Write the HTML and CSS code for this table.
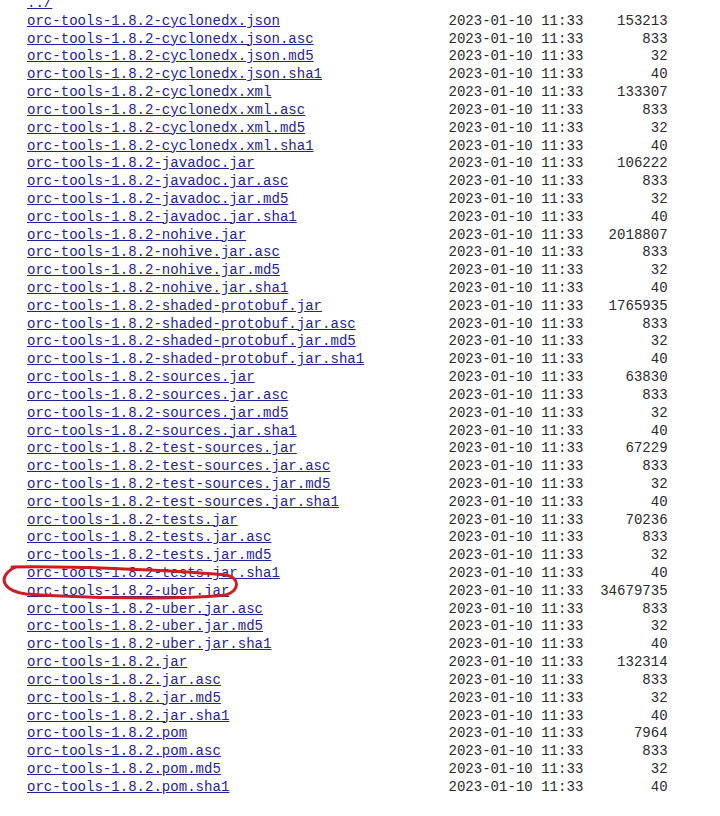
FILE: index.html
```html
<!DOCTYPE html>
<html lang="en">
<head>
  <meta charset="UTF-8" />
  <title>Index of orc-tools/1.8.2</title>
  <link rel="stylesheet" href="styles.css">
</head>
<body>
  <div id="listing">
    <div class="row"><a href="../">../</a><span></span><span></span></div>
    <div class="row"><a href="#">orc-tools-1.8.2-cyclonedx.json</a><span>2023-01-10 11:33</span><span class="size">153213</span></div>
    <div class="row"><a href="#">orc-tools-1.8.2-cyclonedx.json.asc</a><span>2023-01-10 11:33</span><span class="size">833</span></div>
    <div class="row"><a href="#">orc-tools-1.8.2-cyclonedx.json.md5</a><span>2023-01-10 11:33</span><span class="size">32</span></div>
    <div class="row"><a href="#">orc-tools-1.8.2-cyclonedx.json.sha1</a><span>2023-01-10 11:33</span><span class="size">40</span></div>
    <div class="row"><a href="#">orc-tools-1.8.2-cyclonedx.xml</a><span>2023-01-10 11:33</span><span class="size">133307</span></div>
    <div class="row"><a href="#">orc-tools-1.8.2-cyclonedx.xml.asc</a><span>2023-01-10 11:33</span><span class="size">833</span></div>
    <div class="row"><a href="#">orc-tools-1.8.2-cyclonedx.xml.md5</a><span>2023-01-10 11:33</span><span class="size">32</span></div>
    <div class="row"><a href="#">orc-tools-1.8.2-cyclonedx.xml.sha1</a><span>2023-01-10 11:33</span><span class="size">40</span></div>
    <div class="row"><a href="#">orc-tools-1.8.2-javadoc.jar</a><span>2023-01-10 11:33</span><span class="size">106222</span></div>
    <div class="row"><a href="#">orc-tools-1.8.2-javadoc.jar.asc</a><span>2023-01-10 11:33</span><span class="size">833</span></div>
    <div class="row"><a href="#">orc-tools-1.8.2-javadoc.jar.md5</a><span>2023-01-10 11:33</span><span class="size">32</span></div>
    <div class="row"><a href="#">orc-tools-1.8.2-javadoc.jar.sha1</a><span>2023-01-10 11:33</span><span class="size">40</span></div>
    <div class="row"><a href="#">orc-tools-1.8.2-nohive.jar</a><span>2023-01-10 11:33</span><span class="size">2018807</span></div>
    <div class="row"><a href="#">orc-tools-1.8.2-nohive.jar.asc</a><span>2023-01-10 11:33</span><span class="size">833</span></div>
    <div class="row"><a href="#">orc-tools-1.8.2-nohive.jar.md5</a><span>2023-01-10 11:33</span><span class="size">32</span></div>
    <div class="row"><a href="#">orc-tools-1.8.2-nohive.jar.sha1</a><span>2023-01-10 11:33</span><span class="size">40</span></div>
    <div class="row"><a href="#">orc-tools-1.8.2-shaded-protobuf.jar</a><span>2023-01-10 11:33</span><span class="size">1765935</span></div>
    <div class="row"><a href="#">orc-tools-1.8.2-shaded-protobuf.jar.asc</a><span>2023-01-10 11:33</span><span class="size">833</span></div>
    <div class="row"><a href="#">orc-tools-1.8.2-shaded-protobuf.jar.md5</a><span>2023-01-10 11:33</span><span class="size">32</span></div>
    <div class="row"><a href="#">orc-tools-1.8.2-shaded-protobuf.jar.sha1</a><span>2023-01-10 11:33</span><span class="size">40</span></div>
    <div class="row"><a href="#">orc-tools-1.8.2-sources.jar</a><span>2023-01-10 11:33</span><span class="size">63830</span></div>
    <div class="row"><a href="#">orc-tools-1.8.2-sources.jar.asc</a><span>2023-01-10 11:33</span><span class="size">833</span></div>
    <div class="row"><a href="#">orc-tools-1.8.2-sources.jar.md5</a><span>2023-01-10 11:33</span><span class="size">32</span></div>
    <div class="row"><a href="#">orc-tools-1.8.2-sources.jar.sha1</a><span>2023-01-10 11:33</span><span class="size">40</span></div>
    <div class="row"><a href="#">orc-tools-1.8.2-test-sources.jar</a><span>2023-01-10 11:33</span><span class="size">67229</span></div>
    <div class="row"><a href="#">orc-tools-1.8.2-test-sources.jar.asc</a><span>2023-01-10 11:33</span><span class="size">833</span></div>
    <div class="row"><a href="#">orc-tools-1.8.2-test-sources.jar.md5</a><span>2023-01-10 11:33</span><span class="size">32</span></div>
    <div class="row"><a href="#">orc-tools-1.8.2-test-sources.jar.sha1</a><span>2023-01-10 11:33</span><span class="size">40</span></div>
    <div class="row"><a href="#">orc-tools-1.8.2-tests.jar</a><span>2023-01-10 11:33</span><span class="size">70236</span></div>
    <div class="row"><a href="#">orc-tools-1.8.2-tests.jar.asc</a><span>2023-01-10 11:33</span><span class="size">833</span></div>
    <div class="row"><a href="#">orc-tools-1.8.2-tests.jar.md5</a><span>2023-01-10 11:33</span><span class="size">32</span></div>
    <div class="row"><a href="#">orc-tools-1.8.2-tests.jar.sha1</a><span>2023-01-10 11:33</span><span class="size">40</span></div>
    <div class="row"><a href="#">orc-tools-1.8.2-uber.jar</a><span>2023-01-10 11:33</span><span class="size">34679735</span></div>
    <div class="row"><a href="#">orc-tools-1.8.2-uber.jar.asc</a><span>2023-01-10 11:33</span><span class="size">833</span></div>
    <div class="row"><a href="#">orc-tools-1.8.2-uber.jar.md5</a><span>2023-01-10 11:33</span><span class="size">32</span></div>
    <div class="row"><a href="#">orc-tools-1.8.2-uber.jar.sha1</a><span>2023-01-10 11:33</span><span class="size">40</span></div>
    <div class="row"><a href="#">orc-tools-1.8.2.jar</a><span>2023-01-10 11:33</span><span class="size">132314</span></div>
    <div class="row"><a href="#">orc-tools-1.8.2.jar.asc</a><span>2023-01-10 11:33</span><span class="size">833</span></div>
    <div class="row"><a href="#">orc-tools-1.8.2.jar.md5</a><span>2023-01-10 11:33</span><span class="size">32</span></div>
    <div class="row"><a href="#">orc-tools-1.8.2.jar.sha1</a><span>2023-01-10 11:33</span><span class="size">40</span></div>
    <div class="row"><a href="#">orc-tools-1.8.2.pom</a><span>2023-01-10 11:33</span><span class="size">7964</span></div>
    <div class="row"><a href="#">orc-tools-1.8.2.pom.asc</a><span>2023-01-10 11:33</span><span class="size">833</span></div>
    <div class="row"><a href="#">orc-tools-1.8.2.pom.md5</a><span>2023-01-10 11:33</span><span class="size">32</span></div>
    <div class="row"><a href="#">orc-tools-1.8.2.pom.sha1</a><span>2023-01-10 11:33</span><span class="size">40</span></div>

    <!-- hand drawn mark around the uber jar -->
    <svg class="mark" width="250" height="50" viewBox="0 0 250 50">
      <path d="M12 13 C70 12, 170 16, 226 21 C240 24, 240 36, 226 41 C180 46, 80 44, 26 40 C4 37, 0 26, 8 18 C10 16, 12 14, 16 13"
            fill="none" stroke="#cc1d22" stroke-width="3" stroke-linecap="round"/>
    </svg>
  </div>
</body>
</html>
```

FILE: styles.css
```css
/* ======================
   Base
   ====================== */
html, body {
  margin: 0;
  padding: 0;
  background-color: #fff;
}

/* ======================
   Listado de archivos
   ====================== */
#listing {
  position: relative;
  margin-top: -5px;
  padding-left: 27px;
  font-family: "Liberation Mono", "DejaVu Sans Mono", monospace;
  font-size: 14.05px;
  line-height: 17.81px;
  color: #2b2b2b;
}
.row {
  display: grid;
  grid-template-columns: 50ch 16ch 10ch;
  white-space: pre;
}
.row a {
  color: #1f2499;
  text-decoration: underline;
}
.row .size {
  text-align: right;
}

/* marca roja */
.mark {
  position: absolute;
  left: 0;
  top: 559px;
}
```
